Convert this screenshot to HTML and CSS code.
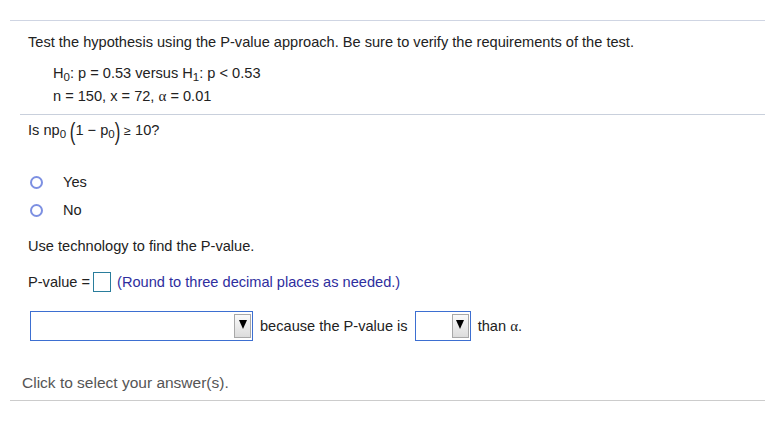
FILE: index.html
```html
<!DOCTYPE html>
<html>
<head>
<meta charset="utf-8">
<link rel="stylesheet" href="styles.css">
</head>
<body>
<div class="page">
  <div class="question">
    <p class="intro">Test the hypothesis using the P-value approach. Be sure to verify the requirements of the test.</p>
    <div class="given">
      <div class="mline">H<sub>0</sub>: p = 0.53 versus H<sub>1</sub>: p &lt; 0.53</div>
      <div class="mline">n = 150, x = 72, <span class="alpha">α</span> = 0.01</div>
    </div>
  </div>
  <div class="answer">
    <div class="req">Is np<sub>0</sub> <span class="paren">(</span>1 − p<sub>0</sub><span class="paren">)</span> <span class="ge">≥</span> 10?</div>
    <ul class="choices">
      <li class="choice"><span class="radio"></span><span>Yes</span></li>
      <li class="choice"><span class="radio"></span><span>No</span></li>
    </ul>
    <p class="tech">Use technology to find the P-value.</p>
    <div class="pv">P-value = <span class="inbox"></span><span class="hint">(Round to three decimal places as needed.)</span></div>
    <div class="concl">
      <span class="select wide"><span class="arrow"><span class="tri"></span></span></span>
      <span class="ctext">because the P-value is</span>
      <span class="select narrow"><span class="arrow"><span class="tri"></span></span></span>
      <span class="ctext">than <span class="alpha">α</span>.</span>
    </div>
  </div>
  <div class="footer">Click to select your answer(s).</div>
</div>
</body>
</html>
```
FILE: styles.css
```css
html, body {
  margin: 0;
  padding: 0;
  background: #ffffff;
}
body {
  font-family: "Liberation Sans", Arial, sans-serif;
  font-size: 14.6px;
  color: #222222;
}
.page {
  margin: 20px 0 0 10px;
  border-top: 1px solid #cfd5e3;
  border-bottom: 1px solid #cccccc;
}
.question {
  padding-left: 18px;
}
.intro {
  margin: 11px 0 0 0;
  line-height: 20px;
}
.given {
  margin: 10px 0 0 0;
  padding-left: 25px;
  padding-bottom: 6px;
}
.mline {
  line-height: 23px;
}
sub {
  font-size: 11.5px;
  vertical-align: -3px;
  line-height: 0;
}
.alpha {
  font-family: "Liberation Serif", serif;
  font-size: 15px;
}
.answer {
  margin-left: 10px;
  padding-left: 8px;
  border-top: 1px solid #c9d0dc;
}
.req {
  padding-top: 3px;
  line-height: 24px;
  height: 24px;
}
.paren {
  display: inline-block;
  font-size: 16px;
  transform: scale(1.05, 1.55);
  vertical-align: -2px;
  line-height: 0;
}
.ge {
  font-size: 12.5px;
}
.choices {
  list-style: none;
  margin: 26px 0 0 0;
  padding: 0;
}
.choice {
  display: flex;
  align-items: center;
  height: 28px;
  padding-left: 2px;
}
.radio {
  box-sizing: border-box;
  width: 13px;
  height: 13px;
  border: 2px solid #7d90e2;
  border-radius: 50%;
  margin-right: 20px;
}
.tech {
  margin: 12px 0 0 0;
  line-height: 20px;
}
.pv {
  margin-top: 15px;
  display: flex;
  align-items: center;
  height: 22px;
}
.inbox {
  box-sizing: border-box;
  width: 18px;
  height: 20px;
  border: 1px solid #2a7d9c;
  margin: 0 6px 0 3px;
}
.hint {
  color: #2e2e9e;
}
.concl {
  margin-top: 18px;
  display: flex;
  align-items: center;
  height: 30px;
  padding-left: 2px;
}
.select {
  box-sizing: border-box;
  height: 30px;
  border: 1px solid #3d6fd1;
  display: flex;
  align-items: center;
  justify-content: flex-end;
  padding-right: 1px;
}
.select.wide {
  width: 223px;
}
.select.narrow {
  width: 56px;
}
.arrow {
  box-sizing: border-box;
  width: 17px;
  height: 24px;
  border: 1px solid #a8a8a8;
  background: linear-gradient(#fafafa, #dcdcdc);
  display: flex;
  align-items: center;
  justify-content: center;
}
.tri {
  width: 0;
  height: 0;
  border-left: 4.5px solid transparent;
  border-right: 4.5px solid transparent;
  border-top: 9px solid #000000;
  margin-top: -4px;
}
.ctext {
  margin: 0 7px;
}
.footer {
  margin-top: 32px;
  padding: 0 0 7px 12px;
  line-height: 20px;
  font-size: 15.5px;
  color: #555555;
}
```
